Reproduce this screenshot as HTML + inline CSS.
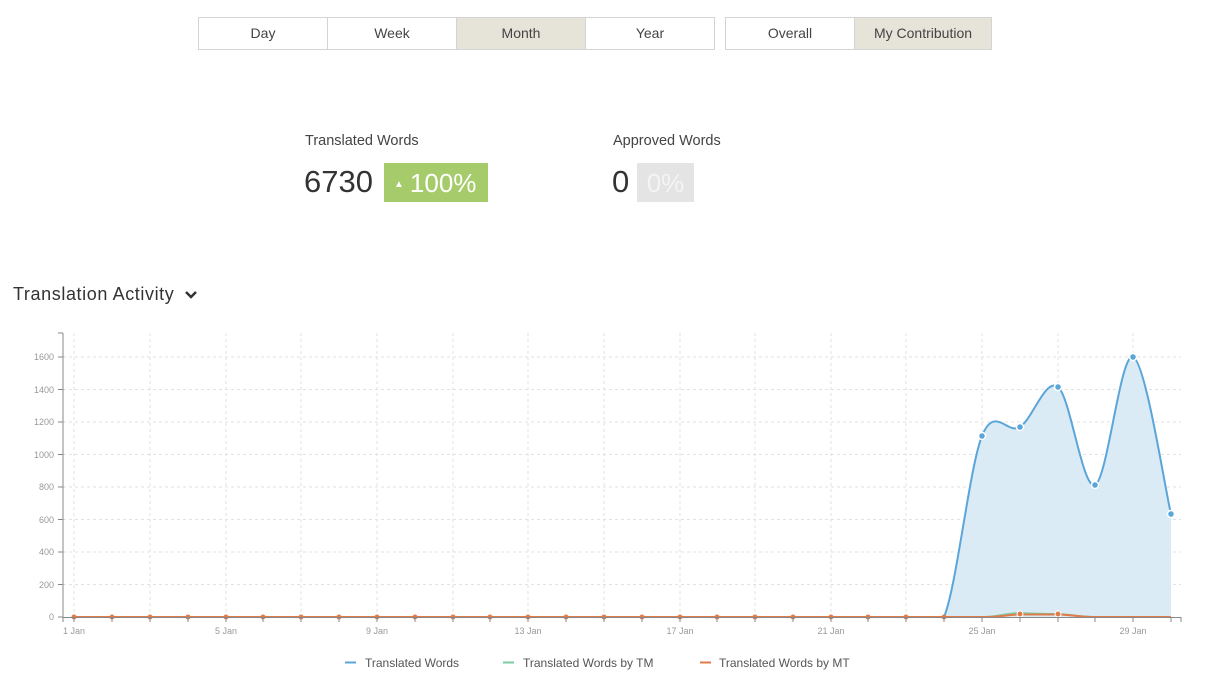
<!DOCTYPE html><html><head><style>
body{margin:0;width:1208px;height:696px;background:#fff;font-family:"Liberation Sans",sans-serif;color:#333;position:relative;overflow:hidden}
.g{position:absolute;top:17px;height:33px;display:flex;border:1px solid #d4d4d4;box-sizing:border-box}
.g div{height:31px;line-height:31px;text-align:center;font-size:14px;color:#444;border-right:1px solid #d4d4d4;box-sizing:border-box}
.g div:last-child{border-right:none}
.a{background:#e6e3d8}
.lbl{position:absolute;font-size:14.5px;color:#444;top:133px}
.num{position:absolute;font-size:31px;color:#333;top:164px}
.box{position:absolute;top:163px;height:39px;line-height:40px;font-size:26px;color:#fff}
</style></head><body>
<div class="g" style="left:198px;width:517px"><div style="width:129px">Day</div><div style="width:129px">Week</div><div class="a" style="width:129px">Month</div><div style="width:128px">Year</div></div>
<div class="g" style="left:725px;width:267px"><div style="width:129px">Overall</div><div class="a" style="width:136px">My Contribution</div></div>
<div class="lbl" style="left:305px">Translated Words</div>
<div class="num" style="left:304px">6730</div>
<div class="box" style="left:384px;width:104px;background:#a5cb6b"><span style="font-size:10px;position:relative;top:-5px;margin:0 6px 0 10px">▲</span>100%</div>
<div class="lbl" style="left:613px">Approved Words</div>
<div class="num" style="left:612px">0</div>
<div class="box" style="left:637px;width:57px;background:#e4e4e4;text-align:center;color:#f4f4f4">0%</div>
<div style="position:absolute;left:13px;top:284px;font-size:18px;letter-spacing:0.6px;color:#333">Translation Activity <svg width="14" height="10" style="margin-left:4px" viewBox="0 0 14 10"><path d="M2 2l5 5 5-5" stroke="#333" stroke-width="2.5" fill="none"/></svg></div>
<svg style="position:absolute;left:0;top:0" width="1208" height="696" font-family="Liberation Sans" font-size="9" fill="#999">
<g stroke="#e2e2e2" stroke-dasharray="3,3">
<line x1="63" x2="1181" y1="357" y2="357"/><line x1="63" x2="1181" y1="389.5" y2="389.5"/><line x1="63" x2="1181" y1="422" y2="422"/><line x1="63" x2="1181" y1="454.5" y2="454.5"/><line x1="63" x2="1181" y1="487" y2="487"/><line x1="63" x2="1181" y1="519.5" y2="519.5"/><line x1="63" x2="1181" y1="552" y2="552"/><line x1="63" x2="1181" y1="584.5" y2="584.5"/>
<line x1="74" x2="74" y1="333" y2="617"/><line x1="150" x2="150" y1="333" y2="617"/><line x1="226" x2="226" y1="333" y2="617"/><line x1="301" x2="301" y1="333" y2="617"/><line x1="377" x2="377" y1="333" y2="617"/><line x1="453" x2="453" y1="333" y2="617"/><line x1="528" x2="528" y1="333" y2="617"/><line x1="604" x2="604" y1="333" y2="617"/><line x1="680" x2="680" y1="333" y2="617"/><line x1="755" x2="755" y1="333" y2="617"/><line x1="831" x2="831" y1="333" y2="617"/><line x1="906" x2="906" y1="333" y2="617"/><line x1="982" x2="982" y1="333" y2="617"/><line x1="1058" x2="1058" y1="333" y2="617"/><line x1="1133" x2="1133" y1="333" y2="617"/>
</g>
<path d="M944 617C956.7 586.8 969.3 467.7 982 436C994.7 404.3 1007.3 435.2 1020 427C1032.7 418.8 1045.5 377.3 1058 387C1070.5 396.7 1082.5 490 1095 485C1107.5 480 1120.3 352.2 1133 357C1145.7 361.8 1164.7 487.8 1171 514L1171 617Z" fill="#dbebf6"/>
<path d="M944 617C956.7 586.8 969.3 467.7 982 436C994.7 404.3 1007.3 435.2 1020 427C1032.7 418.8 1045.5 377.3 1058 387C1070.5 396.7 1082.5 490 1095 485C1107.5 480 1120.3 352.2 1133 357C1145.7 361.8 1164.7 487.8 1171 514" fill="none" stroke="#5aa5d9" stroke-width="2"/>
<path d="M74 617H982C1000 617 1005 613 1020 613C1040 614 1050 614 1058 614C1075 615 1080 617 1095 617H1171" stroke="#7ecba0" stroke-width="2" fill="none"/>
<path d="M74 617H982C1000 617 1005 615 1020 614.5C1040 614.5 1050 614.5 1058 614.5C1075 615 1080 617 1095 617H1171" stroke="#e07b4a" stroke-width="2" fill="none"/>
<g fill="#5aa5d9" stroke="#fff" stroke-width="1.5"><circle cx="982" cy="436" r="3.5"/><circle cx="1020" cy="427" r="3.5"/><circle cx="1058" cy="387" r="3.5"/><circle cx="1095" cy="485" r="3.5"/><circle cx="1133" cy="357" r="3.5"/><circle cx="1171" cy="514" r="3.5"/></g>
<g fill="#e07b4a"><circle cx="74" cy="617" r="2.5"/><circle cx="112" cy="617" r="2.5"/><circle cx="150" cy="617" r="2.5"/><circle cx="188" cy="617" r="2.5"/><circle cx="226" cy="617" r="2.5"/><circle cx="263" cy="617" r="2.5"/><circle cx="301" cy="617" r="2.5"/><circle cx="339" cy="617" r="2.5"/><circle cx="377" cy="617" r="2.5"/><circle cx="415" cy="617" r="2.5"/><circle cx="453" cy="617" r="2.5"/><circle cx="490" cy="617" r="2.5"/><circle cx="528" cy="617" r="2.5"/><circle cx="566" cy="617" r="2.5"/><circle cx="604" cy="617" r="2.5"/><circle cx="642" cy="617" r="2.5"/><circle cx="680" cy="617" r="2.5"/><circle cx="717" cy="617" r="2.5"/><circle cx="755" cy="617" r="2.5"/><circle cx="793" cy="617" r="2.5"/><circle cx="831" cy="617" r="2.5"/><circle cx="868" cy="617" r="2.5"/><circle cx="906" cy="617" r="2.5"/><circle cx="944" cy="617" r="2.5"/><circle cx="1020" cy="614" r="3" stroke="#fff"/><circle cx="1058" cy="614" r="3" stroke="#fff"/></g>
<g stroke="#888" stroke-width="1">
<line x1="63" x2="63" y1="333" y2="622"/><line x1="58" x2="63" y1="333" y2="333"/><line x1="63" x2="1181" y1="617.5" y2="617.5"/><line x1="1181" x2="1181" y1="617" y2="622"/>
<path d="M58 357h5M58 389.5h5M58 422h5M58 454.5h5M58 487h5M58 519.5h5M58 552h5M58 584.5h5M58 617h5"/>
<path d="M74 617v5M112 617v5M150 617v5M188 617v5M226 617v5M263 617v5M301 617v5M339 617v5M377 617v5M415 617v5M453 617v5M490 617v5M528 617v5M566 617v5M604 617v5M642 617v5M680 617v5M717 617v5M755 617v5M793 617v5M831 617v5M868 617v5M906 617v5M944 617v5M982 617v5M1020 617v5M1058 617v5M1095 617v5M1133 617v5M1171 617v5"/>
</g>
<g text-anchor="end"><text x="54" y="360">1600</text><text x="54" y="393">1400</text><text x="54" y="425">1200</text><text x="54" y="458">1000</text><text x="54" y="490">800</text><text x="54" y="523">600</text><text x="54" y="555">400</text><text x="54" y="588">200</text><text x="54" y="620">0</text></g>
<g text-anchor="middle"><text x="74" y="634">1 Jan</text><text x="226" y="634">5 Jan</text><text x="377" y="634">9 Jan</text><text x="528" y="634">13 Jan</text><text x="680" y="634">17 Jan</text><text x="831" y="634">21 Jan</text><text x="982" y="634">25 Jan</text><text x="1133" y="634">29 Jan</text></g>
<g font-size="12" fill="#555"><line x1="345" x2="356" y1="662.5" y2="662.5" stroke="#5aa5d9" stroke-width="2"/><text x="365" y="667">Translated Words</text>
<line x1="503" x2="514" y1="662.5" y2="662.5" stroke="#7ecba0" stroke-width="2"/><text x="523" y="667">Translated Words by TM</text>
<line x1="700" x2="711" y1="662.5" y2="662.5" stroke="#e07b4a" stroke-width="2"/><text x="719" y="667">Translated Words by MT</text></g>
</svg>
</body></html>
